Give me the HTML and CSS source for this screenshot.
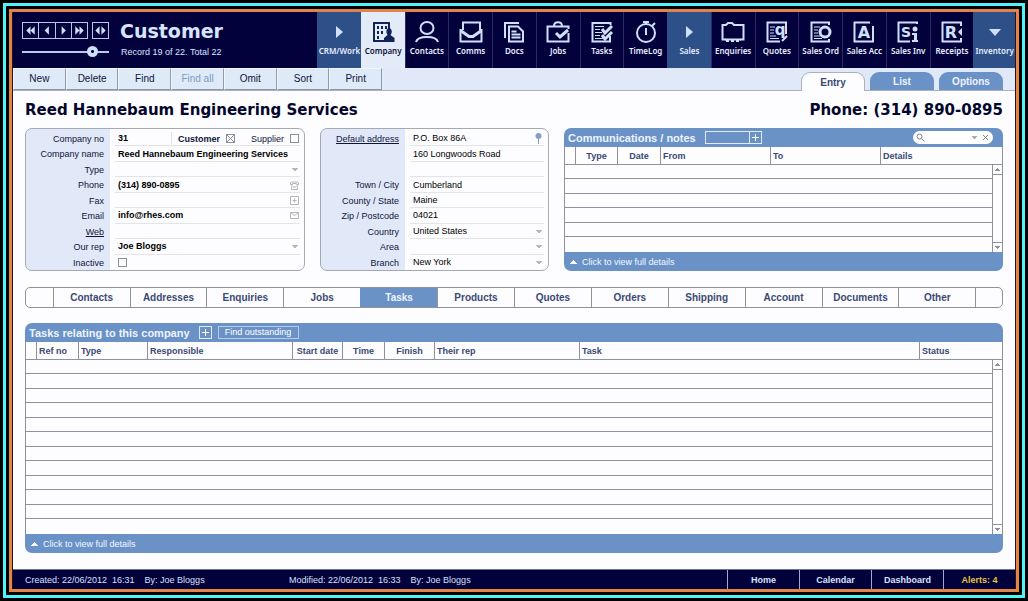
FILE: index.html
```html
<!DOCTYPE html>
<html lang="en">
<head>
<meta charset="utf-8">
<title>Customer</title>
<link rel="stylesheet" href="styles.css">
</head>
<body>
<div class="frame-outer"><div class="frame-cyan"><div class="frame-black"><div class="window">
<header class="header">
  <div class="record">
    <div class="pager">
      <div class="pager-group">
        <button type="button" aria-label="First"><svg viewBox="0 0 16 16"><path d="M8 3.500v9L3.500 8zM12.500 3.500v9L8 8z"/></svg></button>
        <button type="button" aria-label="Previous"><svg viewBox="0 0 16 16"><path d="M10.500 3.500v9L6 8z"/></svg></button>
        <button type="button" aria-label="Next"><svg viewBox="0 0 16 16"><path d="M6 3.500v9L10.500 8z"/></svg></button>
        <button type="button" aria-label="Last"><svg viewBox="0 0 16 16"><path d="M3.500 3.500v9L8 8zM8 3.500v9L12.500 8z"/></svg></button>
      </div>
      <button class="pager-both" type="button" aria-label="Jump"><svg viewBox="0 0 16 16"><path d="M7 3.500v9L2.500 8zM9 3.500v9L13.500 8z"/></svg></button>
      <input class="slider" type="range" min="1" max="22" value="19" aria-label="Record position">
    </div>
    <div class="heading">
      <h1>Customer</h1>
      <p>Record 19 of 22. Total 22</p>
    </div>
  </div>
  <nav class="modules">
    <a href="#" class="group"><svg viewBox="0 0 24 22"><path class="solid" d="M9 5v12l7-6z"/></svg><span>CRM/Work</span></a>
    <a href="#" class="current"><svg viewBox="0 0 24 22"><path d="M3 21V2h15v6M2 20h12"/><path class="solid" d="M6 5h2v3H6zM10 5h2v3h-2zM14 5h2v3h-2zM6 10h2v3H6zM10 10h2v3h-2zM6 15h2v3H6zM13 21v-4l3.500-3c-2-3-1-7 1.500-7s4 4 1.500 7l4 3v4z"/></svg><span>Company</span></a>
    <a href="#"><svg viewBox="0 0 24 22"><ellipse cx="12" cy="7" rx="6.500" ry="6"/><path d="M1 21c1-4 6-5 11-5s10 1 11 5"/></svg><span>Contacts</span></a>
    <a href="#"><svg viewBox="0 0 24 22"><path d="M4 9V1.500h17V9M1.500 8v12.500h21V8"/><path class="bold" d="M1.500 9.500L10 15.500h4l8.500-6"/></svg><span>Comms</span></a>
    <a href="#"><svg viewBox="0 0 24 22"><path d="M3 17V2h14M7 20.500V5.500h9l5 5v10zM9.500 10.500h5M9.500 13.500h9M9.500 16.500h9"/></svg><span>Docs</span></a>
    <a href="#"><svg viewBox="0 0 24 22"><path d="M22.500 12v8.500h-21v-15h21V8M8 5c0-5 8-5 8 0"/><path class="bold" d="M10 12l4 4 8-7"/></svg><span>Jobs</span></a>
    <a href="#"><svg viewBox="0 0 24 22"><path d="M20 15v5.500H2.500V2h18v2"/><path class="thin" d="M5 5.500h9M5 8.500h5M5 11.500h7M5 14.500h5M5 17.500h8"/><path class="bold" d="M12 8l3 4 7-7M12 14l3 4 7-7"/></svg><span>Tasks</span></a>
    <a href="#"><svg viewBox="0 0 24 22"><circle cx="12" cy="12" r="9"/><path d="M12 3V0M9 1h6M18 5l3-3M12 7v7"/></svg><span>TimeLog</span></a>
    <a href="#" class="group"><svg viewBox="0 0 24 22"><path class="solid" d="M9 5v12l7-6z"/></svg><span>Sales</span></a>
    <a href="#"><svg viewBox="0 0 24 22"><path d="M5 18.500H1.500V4H5l2-2h4l2 2h9.500v14.500H19"/><path d="M5 20h15" stroke-dasharray="3 2"/><path d="M4 18.500h16"/></svg><span>Enquiries</span></a>
    <a href="#"><svg viewBox="0 0 24 22"><path d="M21 13V1.500H2.500v19H15M17 20l5-5"/><path class="thin" d="M5 6h5M5 9h4M5 12h4M5 15h6M5 17.500h9"/><text x="15" y="14" font-size="15">q</text></svg><span>Quotes</span></a>
    <a href="#"><svg viewBox="0 0 24 22"><path d="M20 4V1.500H2.500v19H20V18"/><path class="thin" d="M5 6h6M5 9h4M5 12h4M5 15h6M5 17.500h8"/><circle class="bold" cx="16" cy="11" r="5"/></svg><span>Sales Ord</span></a>
    <a href="#"><svg viewBox="0 0 24 22"><path d="M18 1.500H2.500v19H21V5"/><text x="12" y="17" font-size="16">A</text></svg><span>Sales Acc</span></a>
    <a href="#"><svg viewBox="0 0 24 22"><path d="M21 3V1.500H2.500v19H14M16 20h6M19 21v-8h-3"/><circle class="solid" cx="19" cy="8" r="2.500"/><path class="bold" d="M19.500 12v8"/><text x="10" y="16" font-size="14">S</text></svg><span>Sales Inv</span></a>
    <a href="#"><svg viewBox="0 0 24 22"><path d="M21 5V1.500H2.500v19H21V17"/><path class="solid" d="M22 7v8l-4-4z"/><text x="11" y="17" font-size="16">R</text></svg><span>Receipts</span></a>
    <a href="#" class="group last"><svg viewBox="0 0 24 22"><path class="solid" d="M6 8h12l-6 7z"/></svg><span>Inventory</span></a>
  </nav>
</header>

<div class="toolbar">
  <div class="actions">
    <button type="button">New</button><button type="button">Delete</button><button type="button">Find</button><button type="button" disabled>Find all</button><button type="button">Omit</button><button type="button">Sort</button><button type="button">Print</button>
  </div>
  <nav class="views"><a href="#" class="current">Entry</a><a href="#">List</a><a href="#">Options</a></nav>
</div>

<main class="main">
  <div class="titles"><h2>Reed Hannebaum Engineering Services</h2><h2>Phone: (314) 890-0895</h2></div>

  <div class="cards">
    <section class="card strong">
      <div class="row"><label for="no">Company no</label><div class="value"><input id="no" class="number" value="31"><label class="check bold-check">Customer <input type="checkbox" checked></label><label class="check">Supplier <input type="checkbox"></label></div></div>
      <div class="row"><label for="name">Company name</label><div class="value"><input id="name" value="Reed Hannebaum Engineering Services"></div></div>
      <div class="row"><label for="type">Type</label><div class="value"><select id="type"><option></option></select></div></div>
      <div class="row"><label for="phone">Phone</label><div class="value"><input id="phone" value="(314) 890-0895"><svg class="mini" viewBox="0 0 9 9"><path d="M.5 3.500V2l1-1h6l1 1v1.500h-2V2.500h-4v1zM2 4l-.5 4.500h6L7 4M3 6h3"/></svg></div></div>
      <div class="row"><label for="fax">Fax</label><div class="value"><input id="fax"><svg class="mini" viewBox="0 0 9 9"><path d="M.5.5h8v8h-8zM2.500 4.500h4M4.500 2.500v4"/></svg></div></div>
      <div class="row"><label for="email">Email</label><div class="value"><input id="email" value="info@rhes.com"><svg class="mini" viewBox="0 0 9 9"><path d="M.5 1.500h8v6h-8zM.5 1.500l4 3 4-3"/></svg></div></div>
      <div class="row"><label for="web"><a href="#">Web</a></label><div class="value"><input id="web"></div></div>
      <div class="row"><label for="rep">Our rep</label><div class="value"><select id="rep"><option>Joe Bloggs</option></select></div></div>
      <div class="row"><label for="inactive">Inactive</label><div class="value"><input id="inactive" type="checkbox"></div></div>
    </section>

    <section class="card">
      <div class="row"><label for="a1"><a href="#">Default address</a></label><div class="value"><input id="a1" value="P.O. Box 86A"><svg class="pin" viewBox="0 0 7 11"><circle cx="3.500" cy="3" r="3"/><path d="M3 5h1v6H3z"/></svg></div></div>
      <div class="row"><span class="blank"></span><div class="value"><input aria-label="Address line 2" value="160 Longwoods Road"></div></div>
      <div class="row"><span class="blank"></span><div class="value"><input aria-label="Address line 3"></div></div>
      <div class="row"><label for="town">Town / City</label><div class="value"><input id="town" value="Cumberland"></div></div>
      <div class="row"><label for="county">County / State</label><div class="value"><input id="county" value="Maine"></div></div>
      <div class="row"><label for="zip">Zip / Postcode</label><div class="value"><input id="zip" value="04021"></div></div>
      <div class="row"><label for="country">Country</label><div class="value"><select id="country"><option>United States</option></select></div></div>
      <div class="row"><label for="area">Area</label><div class="value"><select id="area"><option></option></select></div></div>
      <div class="row"><label for="branch">Branch</label><div class="value"><select id="branch"><option>New York</option></select></div></div>
    </section>

    <section class="panel">
      <div class="panel-head">
        <h3>Communications / notes</h3>
        <div class="add"><input aria-label="New note"><button type="button" class="plus" aria-label="Add note"></button></div>
        <div class="search">
          <svg viewBox="0 0 9 9"><circle cx="3.500" cy="3.500" r="2.500"/><path d="M5.500 5.500L8.500 8.500"/></svg>
          <input aria-label="Search notes">
          <svg viewBox="0 0 9 9"><path class="fill" d="M1.500 3h6l-3 3.500z"/></svg>
          <svg viewBox="0 0 9 9"><path d="M2 2l5 5M7 2L2 7"/></svg>
        </div>
      </div>
      <table>
        <colgroup><col class="w10"><col class="w42"><col class="w43"><col class="w110"><col class="w110"><col><col class="w10"></colgroup>
        <thead><tr><th></th><th class="mid">Type</th><th class="mid">Date</th><th>From</th><th>To</th><th colspan="2">Details</th></tr></thead>
        <tbody>
          <tr><td colspan="6"></td><td class="scroll" rowspan="6"><div><button type="button" aria-label="Scroll up"></button><button type="button" class="down" aria-label="Scroll down"></button></div></td></tr>
          <tr><td colspan="6"></td></tr><tr><td colspan="6"></td></tr><tr><td colspan="6"></td></tr><tr><td colspan="6"></td></tr><tr><td colspan="6"></td></tr>
        </tbody>
      </table>
      <a href="#" class="panel-foot">Click to view full details</a>
    </section>
  </div>

  <nav class="tabs"><span class="first"></span><a href="#">Contacts</a><a href="#">Addresses</a><a href="#">Enquiries</a><a href="#">Jobs</a><a href="#" class="current">Tasks</a><a href="#">Products</a><a href="#">Quotes</a><a href="#">Orders</a><a href="#">Shipping</a><a href="#">Account</a><a href="#">Documents</a><a href="#">Other</a><span class="last"></span></nav>

  <section class="panel">
    <div class="panel-head">
      <h3>Tasks relating to this company</h3>
      <button type="button" class="plus boxed" aria-label="Add task"></button>
      <button type="button" class="outline">Find outstanding</button>
    </div>
    <table>
      <colgroup><col class="w10"><col class="w42"><col class="w69"><col class="w145"><col class="w50"><col class="w42"><col class="w50"><col class="w145"><col><col class="w73"><col class="w10"></colgroup>
      <thead><tr><th></th><th>Ref no</th><th>Type</th><th>Responsible</th><th class="mid">Start date</th><th class="mid">Time</th><th class="mid">Finish</th><th>Their rep</th><th>Task</th><th colspan="2">Status</th></tr></thead>
      <tbody>
        <tr><td colspan="10"></td><td class="scroll" rowspan="12"><div><button type="button" aria-label="Scroll up"></button><button type="button" class="down" aria-label="Scroll down"></button></div></td></tr>
        <tr><td colspan="10"></td></tr><tr><td colspan="10"></td></tr><tr><td colspan="10"></td></tr><tr><td colspan="10"></td></tr><tr><td colspan="10"></td></tr><tr><td colspan="10"></td></tr><tr><td colspan="10"></td></tr><tr><td colspan="10"></td></tr><tr><td colspan="10"></td></tr><tr><td colspan="10"></td></tr><tr><td colspan="10"></td></tr>
      </tbody>
    </table>
    <a href="#" class="panel-foot">Click to view full details</a>
  </section>
</main>

<footer class="footer">
  <p class="created"><span>Created: 22/06/2012&nbsp; 16:31</span><span>By: Joe Bloggs</span></p>
  <p class="modified"><span>Modified: 22/06/2012&nbsp; 16:33</span><span>By: Joe Bloggs</span></p>
  <nav><a href="#">Home</a><a href="#">Calendar</a><a href="#">Dashboard</a><a href="#" class="alert">Alerts: 4</a></nav>
</footer>
</div></div></div></div>
</body>
</html>
```
FILE: styles.css
```css
:root {
  --navy: #02013c;
  --blue: #6a92c6;
  --pale: #e1e8f7;
  --ice: #cfe0fb;
  --paper: #fdfcff;
  --line: #8f929d;
  --ink: #3a4a72;
}
* { box-sizing: border-box; }
body, h1, h2, h3, p { margin: 0; }
body { font: 9px/12px "Liberation Sans", Arial, sans-serif; color: #10143c; }
button, input, select { font: inherit; color: inherit; margin: 0; padding: 0; border: 0; border-radius: 0; background: none; min-width: 0; }
a { color: inherit; text-decoration: none; }
svg { display: block; }

.frame-outer, .frame-cyan, .frame-black { display: flex; padding: 3px; background: #000; }
.frame-outer { min-height: 100vh; }
.frame-cyan { background: #4ff3fa; }
.frame-outer > div, .frame-cyan > div, .window { flex: 1; min-width: 0; }
.window { display: flex; flex-direction: column; border: 3px solid #e08448; background: var(--paper); box-shadow: inset 1px 0 #26141c, inset -1px 0 #26141c; padding: 0 1px; }

.header { display: flex; height: 56px; background: var(--navy); color: #dbe6ff; }
.record { display: flex; flex: 0 0 304px; padding: 10px 0 0 9px; gap: 11px; }
.pager { display: grid; grid-template-columns: 66px 17px; column-gap: 4px; align-content: start; row-gap: 7px; }
.pager-group { display: flex; border: 1px solid #b9c4e6; }
.pager button { display: grid; place-items: center; flex: 1; height: 15px; }
.pager-group button + button { border-left: 1px solid #b9c4e6; }
.pager .pager-both { height: 17px; border: 1px solid #b9c4e6; }
.pager svg { width: 15px; height: 15px; fill: var(--ice); }
.slider { grid-column: 1 / 3; width: 100%; height: 12px; appearance: none; }
.slider::-webkit-slider-runnable-track { height: 2px; background: #b9c9ee; }
.slider::-webkit-slider-thumb { appearance: none; width: 11px; height: 11px; margin-top: -5px; border-radius: 50%; background: radial-gradient(circle, #02013c 1px, #cfe0fb 2px); }
.heading h1 { font: bold 19px/18px "DejaVu Sans", Verdana, sans-serif; color: #d6e5fd; }
.heading p { padding: 6px 0 0 1px; }

.modules { display: flex; flex: 1; min-width: 0; }
.modules a { flex: 44 1 0; min-width: 0; display: flex; flex-direction: column; align-items: center; gap: 3px; padding-top: 9px; border-left: 1px solid #2a2c62; font: 600 8px/10px "Noto Sans", sans-serif; white-space: nowrap; color: #e9efff; }
.modules .last { flex-grow: 42; }
.modules span { display: flex; justify-content: center; width: 0; }
.modules svg { width: 24px; height: 22px; fill: none; stroke: var(--ice); stroke-width: 2; }
.modules .solid, .modules text { fill: var(--ice); stroke: none; }
.modules text { font-family: "DejaVu Sans", Verdana, sans-serif; font-weight: bold; text-anchor: middle; }
.modules .bold { stroke-width: 3; }
.modules .thin { stroke-width: 1; }
.modules .group { background: #2d5089; border-color: #2d5089; }
.modules .current { background: #e3ebf9; border-color: #e3ebf9; color: #10143c; }
.modules .current svg { stroke: #12235a; }
.modules .current .solid { fill: #12235a; }

.toolbar { display: flex; justify-content: space-between; height: 23px; background: var(--pale); border-bottom: 1px solid #a9b1c2; }
.actions { display: flex; flex: 0 0 369px; }
.actions button { flex: 1; height: 22px; border: 1px solid; border-color: #f3f7fc #9299a8 #8e95a4 #f3f7fc; background: #deeaf7; font-size: 10px; line-height: 12px; }
.actions button:disabled { color: #7d9cc4; }
.views { display: flex; gap: 5px; padding: 4px 12px 0 0; }
.views a { width: 64px; height: 18px; border-radius: 9px 9px 0 0; background: var(--blue); color: #eef4ff; font: bold 10px/19px "Liberation Sans", Arial, sans-serif; text-align: center; }
.views .current { height: 19px; border: 1px solid #a9b1c2; border-bottom: 0; background: var(--paper); color: var(--ink); }

.main { flex: 1; display: flex; flex-direction: column; padding: 10px 12px 15px; }
.titles { display: flex; justify-content: space-between; margin-bottom: 9px; }
.titles h2 { font: bold 15px/18px "DejaVu Sans", Verdana, sans-serif; color: #03062c; white-space: nowrap; }
.cards { display: grid; grid-template-columns: 280fr 229fr 439fr; gap: 15px; margin-bottom: 16px; }

.card { display: flex; flex-direction: column; border: 1px solid #a4a9b6; border-radius: 7px; padding: 2px 4px 0 0; background: linear-gradient(to right, var(--pale) 84px, transparent 84px); }
.row { display: flex; flex: 1 1 0; min-height: 15px; }
.row > label, .blank { flex: 0 0 78px; text-align: right; line-height: 17px; white-space: nowrap; }
.row > label a { text-decoration: underline; }
.value { flex: 1; min-width: 0; margin-left: 11px; padding: 1px 1px 0 3px; display: flex; align-items: center; border-bottom: 1px solid #e4e3ea; color: #000; }
.row:last-child .value { border-bottom: 0; }
.value input:not([type]), .value select { flex: 1; height: 13px; line-height: 13px; }
.value select { appearance: none; background: conic-gradient(from -45deg at 50% 100%, #b5b7c0 90deg, transparent 0) right 1px center / 6px 3px no-repeat; }
.strong .value, .bold-check { font-weight: bold; }
.value input.number { flex: 0 0 54px; border-right: 1px solid #e4e3ea; margin-right: 6px; }
.check { display: flex; flex: 1; align-items: center; gap: 6px; white-space: nowrap; font-weight: normal; color: #10143c; }
.check.bold-check { font-weight: bold; }
.check + .check { flex: 0 0 auto; }
input[type="checkbox"] { appearance: none; width: 9px; height: 9px; border: 1px solid #8c909c; }
input[type="checkbox"]:checked { background: linear-gradient(45deg, transparent 45%, #8c909c 45% 55%, transparent 55%), linear-gradient(-45deg, transparent 45%, #8c909c 45% 55%, transparent 55%); }
.mini { width: 9px; height: 9px; fill: none; stroke: #b3b4bd; }
.pin { width: 7px; height: 11px; fill: #86a0c5; margin-right: 1px; }

.panel { border-radius: 7px; overflow: hidden; background: var(--blue); }
.panel-head { display: flex; align-items: center; height: 19px; padding: 0 10px 0 4px; color: #fff; }
.panel-head h3 { font-size: 11px; line-height: 14px; color: #eef4ff; white-space: nowrap; }
.add { display: flex; margin-left: 9px; border: 1px solid #dfe9f8; height: 13px; }
.add input { width: 43px; }
.plus { width: 11px; height: 11px; background: linear-gradient(#fff, #fff) center / 7px 1px no-repeat, linear-gradient(#fff, #fff) center / 1px 7px no-repeat; }
.add .plus { width: 12px; border-left: 1px solid #dfe9f8; }
.boxed { width: 13px; height: 13px; margin-left: 9px; border: 1px solid #dfe9f8; }
.outline { width: 81px; height: 13px; margin-left: 6px; border: 1px solid #b5cbe8; line-height: 11px; white-space: nowrap; }
.search { display: flex; align-items: center; gap: 2px; width: 80px; height: 13px; margin-left: auto; padding: 0 3px; border-radius: 7px; background: #fff; }
.search input { flex: 1; width: 0; height: 11px; }
.search svg { width: 9px; height: 9px; fill: none; stroke: #7b828f; }
.search .fill { fill: #a9abb4; stroke: none; }

table { width: 100%; table-layout: fixed; border-collapse: separate; border-spacing: 0; background: var(--paper); border: solid var(--line); border-width: 0 1px; }
th { height: 18px; padding: 1px 0 0 2px; border-bottom: 1px solid var(--line); text-align: left; color: var(--ink); white-space: nowrap; }
th + th { border-left: 1px solid var(--line); }
th.mid { text-align: center; padding-left: 0; }
td { height: 14px; padding: 0; border-bottom: 1px solid var(--line); }
tr:nth-child(even) td { height: 15px; }
tr:last-child td, td.scroll { border-bottom: 0; }
td.scroll { border-left: 1px solid var(--line); vertical-align: top; height: 1px; }
.scroll div { display: flex; flex-direction: column; justify-content: space-between; height: 100%; }
.scroll button { height: 10px; background: conic-gradient(from 135deg at 50% 0, #8b8f99 90deg, transparent 0) center / 5px 3px no-repeat; border-bottom: 1px solid var(--line); }
.scroll .down { background: conic-gradient(from -45deg at 50% 100%, #8b8f99 90deg, transparent 0) center / 5px 3px no-repeat; border-top: 1px solid var(--line); border-bottom: 0; }
.w10 { width: 10px; } .w42 { width: 42px; } .w43 { width: 43px; } .w50 { width: 50px; }
.w69 { width: 69px; } .w73 { width: 73px; } .w110 { width: 110px; } .w145 { width: 145px; }
.panel-foot { display: flex; align-items: center; gap: 5px; height: 19px; padding-left: 6px; color: #f4f8ff; }
.panel-foot::before { content: ""; width: 7px; height: 4px; background: conic-gradient(from 135deg at 50% 0, #f4f8ff 90deg, transparent 0); }

.tabs { display: flex; height: 21px; margin-bottom: 15px; border: 1px solid var(--line); border-radius: 5px; }
.tabs a { flex: 77 1 0; min-width: 0; border-left: 1px solid var(--line); text-align: center; font: bold 10px/19px "Liberation Sans", Arial, sans-serif; color: var(--ink); }
.tabs .first { flex: 27 1 0; }
.tabs .last { flex: 26 1 0; border-left: 1px solid var(--line); }
.tabs .current { background: var(--blue); border-color: var(--blue); color: #eef4ff; }

.footer { display: flex; height: 20px; border-top: 1px solid #70718c; background: var(--navy); color: #d9e2f8; line-height: 20px; white-space: nowrap; }
.footer p { display: flex; gap: 10px; }
.created { flex: 0 0 276px; padding-left: 12px; }
.footer nav { display: flex; margin-left: auto; }
.footer nav a { width: 72px; border-left: 1px solid #a3a9c6; text-align: center; font-weight: bold; }
.footer .alert { color: #e5c53e; }
```
